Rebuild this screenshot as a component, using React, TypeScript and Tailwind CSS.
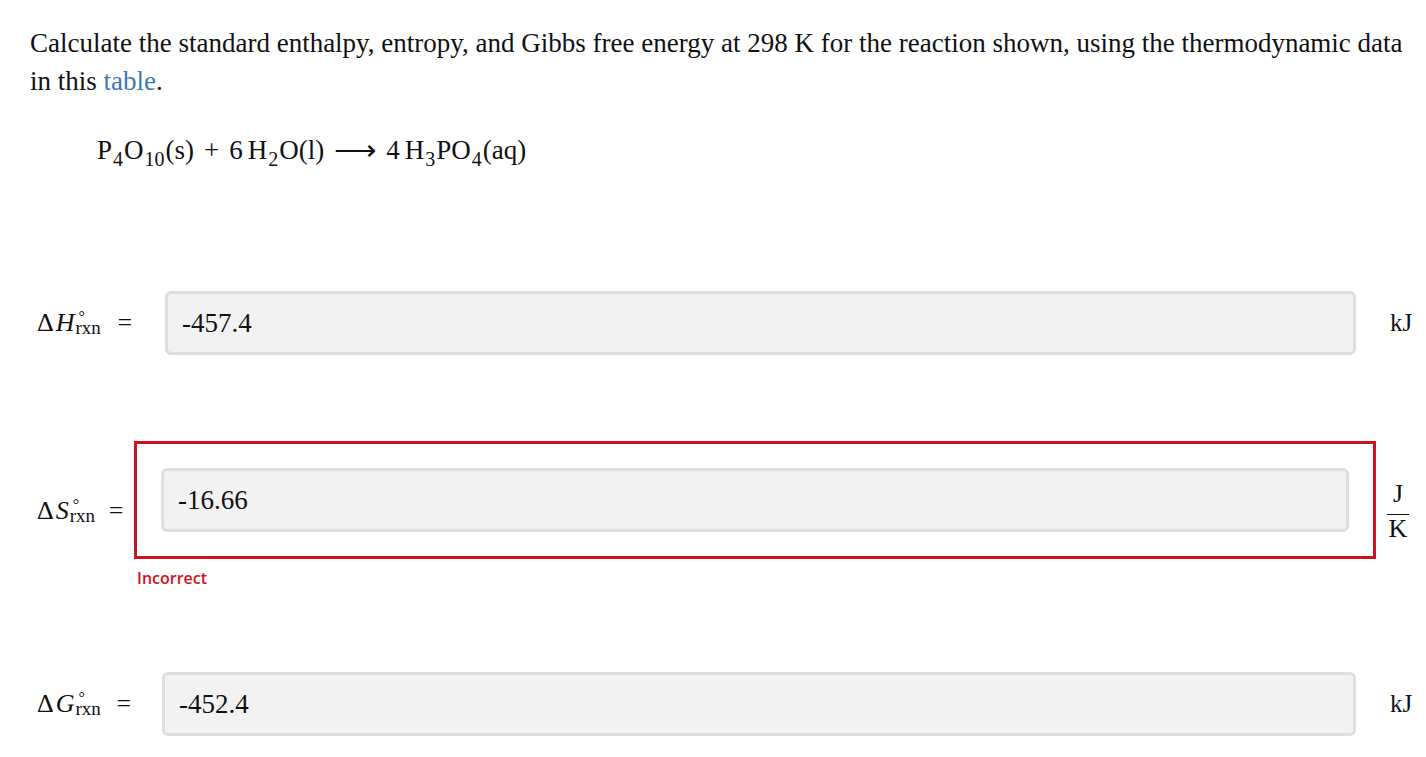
import React from "react";

const serif = { fontFamily: '"Liberation Serif", "Times New Roman", serif' };

function RxnLabel({ letter, eqGap }: { letter: string; eqGap: string }) {
  return (
    <div className="pl-[7px] text-[26px] leading-[32px] text-[#111]" style={serif}>
      <span>Δ</span>
      <span className="ml-[2px] italic">{letter}</span>
      <span className="relative ml-[1px] inline-block h-[20px] w-[29px]">
        <span className="absolute left-[3px] top-[2px] text-[16px] leading-[8px]">°</span>
        <span className="absolute left-0 top-[11px] text-[19px] leading-[12px]">rxn</span>
      </span>
      <span className={eqGap}>=</span>
    </div>
  );
}

function Field({ value }: { value: string }) {
  return (
    <div
      className="flex h-[64px] items-center rounded-[6px] border-[3px] border-[#dedede] bg-[#f2f2f2] px-[14px] text-[27px] text-[#111]"
      style={serif}
    >
      {value}
    </div>
  );
}

function Sub({ children }: { children: React.ReactNode }) {
  return <span className="mx-[1px] text-[20px] leading-none align-[-7px]">{children}</span>;
}

export default function App() {
  return (
    <div className="min-h-screen bg-white text-[#111]" style={serif}>
      <div className="pl-[30px] pt-[24px]">
        <p className="text-[27px] leading-[38px]">
          Calculate the standard enthalpy, entropy, and Gibbs free energy at 298 K for the reaction shown, using the thermodynamic data
          <br />
          in this <span className="text-[#3d7ab8]">table</span>.
        </p>

        <div className="ml-[67px] mt-[31px] h-[38px] text-[27px] leading-[38px]">
          P<Sub>4</Sub>O<Sub>10</Sub>(s)<span className="mx-[10px]">+</span>6<span className="ml-[5px]">H</span>
          <Sub>2</Sub>O(l)<span className="mx-[12px] inline-block w-[38px] scale-x-110">⟶</span>4
          <span className="ml-[5px]">H</span>
          <Sub>3</Sub>PO<Sub>4</Sub>(aq)
        </div>
      </div>

      <div className="mt-[122px] flex items-center pl-[30px]">
        <div className="w-[135px]">
          <RxnLabel letter="H" eqGap="ml-[13px]" />
        </div>
        <div className="mr-[20px] flex-1">
          <Field value="-457.4" />
        </div>
        <div className="w-[50px] pl-[14px] text-[25px]">kJ</div>
      </div>

      <div className="mt-[86px] flex items-center pl-[30px]">
        <div className="w-[104px] pb-[8px]">
          <RxnLabel letter="S" eqGap="ml-[10px]" />
        </div>
        <div className="flex-1">
          <div className="border-[3px] border-[#d0121f] p-[24px]">
            <Field value="-16.66" />
          </div>
          <div
            className="mt-[9px] pl-[3px] text-[16px] font-semibold leading-[20px] text-[#d0121f]"
            style={{ fontFamily: '"Open Sans", "Noto Sans", sans-serif' }}
          >
            Incorrect
          </div>
        </div>
        <div className="w-[50px] pb-[14px] pl-[11px] text-[26px]">
          <div className="inline-flex w-[22px] flex-col items-center leading-none">
            <span className="pb-[7px]">J</span>
            <span className="block h-[1px] w-[22px] bg-[#111]" />
            <span className="pt-[1px]">K</span>
          </div>
        </div>
      </div>

      <div className="mt-[84px] flex items-center pl-[30px]">
        <div className="w-[132px]">
          <RxnLabel letter="G" eqGap="ml-[12px]" />
        </div>
        <div className="mr-[20px] flex-1">
          <Field value="-452.4" />
        </div>
        <div className="w-[50px] pl-[14px] text-[25px]">kJ</div>
      </div>
      <div className="h-[22px]" />
    </div>
  );
}
